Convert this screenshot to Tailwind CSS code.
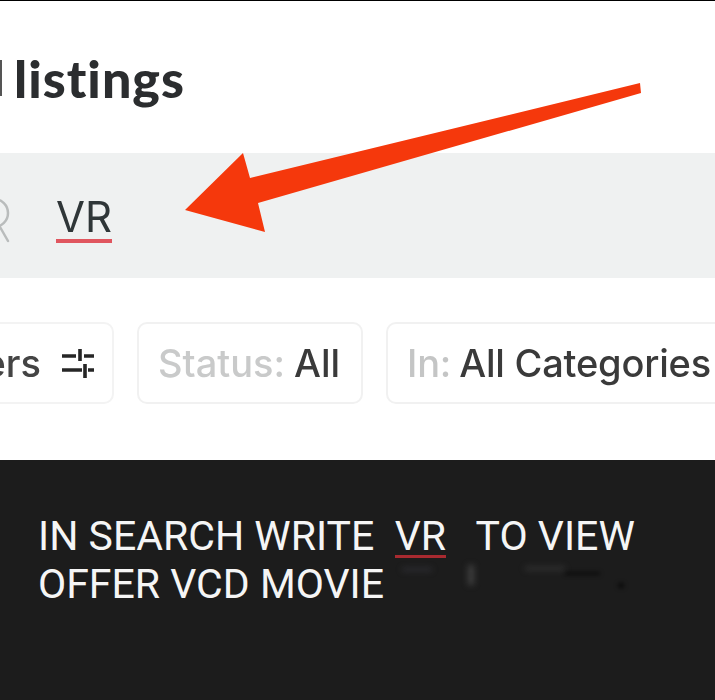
<!DOCTYPE html>
<html>
<head>
<meta charset="utf-8">
<script src="https://cdn.jsdelivr.net/npm/@tailwindcss/browser@4"></script>
</head>
<body class="bg-white">
<div class="relative w-[715px] h-[700px] overflow-hidden bg-white font-['Inter',sans-serif] flex flex-col">
  <div class="h-[1px] bg-black shrink-0"></div>
  <div class="h-[152px] shrink-0 pt-[46px] pl-[14px]">
    <div class="absolute left-[-1px] top-[60px] w-[3px] h-[36px] bg-[#555] blur-[0.6px]"></div>
    <h1 class="text-[52px] leading-[62px] font-black tracking-[1px] text-[#2b2d2f] blur-[0.6px] font-['Lato',sans-serif]">listings</h1>
  </div>
  <div class="h-[125px] shrink-0 bg-[#eff1f1] flex items-center pl-[56px] relative">
    <svg class="absolute left-[-24px] top-[42px] blur-[0.5px]" width="40" height="50" viewBox="0 0 40 50" fill="none" stroke="#b9bcbc" stroke-width="2.5"><circle cx="18" cy="18" r="14"/><path d="M24 32l8 14" stroke-linecap="round"/></svg>
    <span class="text-[42px] leading-[42px] text-[#2f3638] border-b-[4px] border-[#e0565f] pb-[1px] mt-[8px] blur-[0.4px]">VR</span>
  </div>
  <div class="h-[182px] shrink-0 pt-[44px] flex gap-[23px] ml-[-40px] text-[38px] leading-[44px] font-medium blur-[0.4px]">
    <div class="w-[154px] h-[82px] shrink-0 rounded-[10px] border-2 border-[#f3f3f3] flex items-center justify-end pr-[17px] gap-[20px] text-[#444]">
      <span>ers</span>
      <svg width="34" height="34" viewBox="0 0 34 34" fill="none" stroke="#262626" stroke-width="3.6"><path d="M1 10h14M23 10h10M19 3v12M1 24h20M27 24h6M24 18v14"/></svg>
    </div>
    <div class="w-[226px] h-[82px] shrink-0 rounded-[10px] border-2 border-[#f1f1f1] flex items-center pl-[19px] gap-[9px]">
      <span class="text-[#c9caca]">Status:</span><span class="text-[#3a3a3a]">All</span>
    </div>
    <div class="w-[360px] h-[82px] shrink-0 rounded-[10px] border-2 border-[#f1f1f1] flex items-center pl-[19px] gap-[8px] whitespace-nowrap tracking-[-0.2px]">
      <span class="text-[#c4c5c5]">In:</span><span class="text-[#3a3a3a]">All Categories</span>
    </div>
  </div>
  <div class="relative flex-1 bg-[#1c1c1c] pl-[38px] pt-[52px] text-[41px] leading-[48px] text-[#f5f5f5] font-['Roboto',sans-serif]">
    <div class="flex whitespace-pre"><span>IN SEARCH WRITE  </span><span class="border-b-[3px] border-[#a82a30] h-[46px]">VR</span><span class="ml-[10px]">  TO VIEW</span></div>
    <div class="whitespace-nowrap">OFFER VCD MOVIE</div>
    <div class="absolute left-[402px] top-[108px] w-[30px] h-[3px] bg-[#556]/40 blur-[3px]"></div>
    <div class="absolute left-[468px] top-[105px] w-[6px] h-[20px] bg-[#777]/40 blur-[3px]"></div>
    <div class="absolute left-[525px] top-[107px] w-[40px] h-[3px] bg-[#666]/40 blur-[3px]"></div>
    <div class="absolute left-[565px] top-[112px] w-[35px] h-[3px] bg-black/60 blur-[2px]"></div>
    <div class="absolute left-[618px] top-[123px] w-[6px] h-[5px] bg-black/60 blur-[2px]"></div>
  </div>
  <svg class="absolute left-0 top-0 pointer-events-none" width="715" height="700" viewBox="0 0 715 700"><polygon points="185,210 243,153 250,178 640,83 641,93 258,203 265,232" fill="#f5380c"/></svg>
</div>
</body>
</html>
